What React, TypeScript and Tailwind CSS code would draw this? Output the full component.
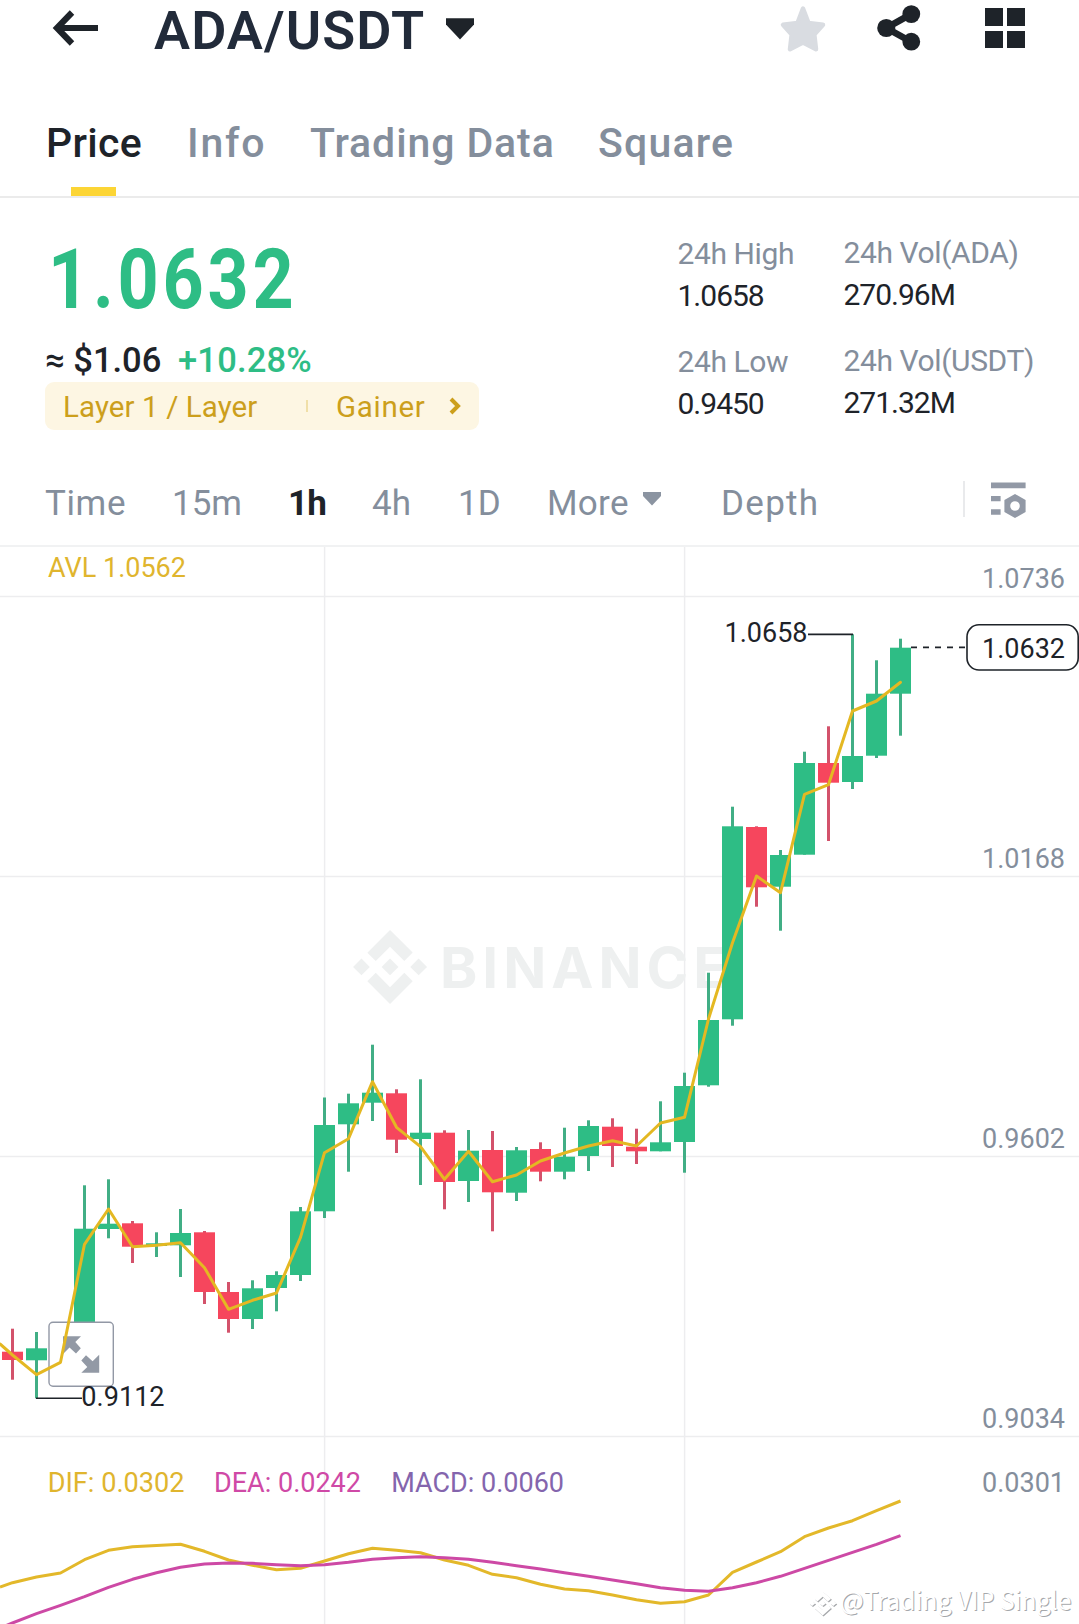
import React from "react";

const UP = "#2ebd85";
const DOWN = "#f6465d";
const STEP = 24;
const X0 = 12.5;

const BINANCE =
  "M16.624 13.9202l2.7175 2.7154-7.353 7.353-7.353-7.352 2.7175-2.7164 4.6355 4.6595 4.6356-4.6595zm4.6366-4.6366L24 12l-2.7154 2.7164L18.5682 12l2.6924-2.7164zm-9.272.001l2.7163 2.6914-2.7164 2.7174v-.001L9.2721 12l2.7164-2.7154zm-9.2722-.001L5.4088 12l-2.6914 2.6924L0 12l2.7164-2.7164zM11.9885.0115l7.353 7.329-2.7174 2.7154-4.6356-4.6356-4.6355 4.6595-2.7174-2.7154 7.353-7.353z";

// index, direction, body top, body bottom, wick top, wick bottom
type Candle = [number, "u" | "d", number, number, number, number];
const candles: Candle[] = [
  [0, "d", 1351.7, 1360, 1328.7, 1379.7],
  [1, "u", 1348.3, 1360.3, 1332, 1398.3],
  [3, "u", 1228.7, 1340, 1185.3, 1340],
  [4, "u", 1223.7, 1229, 1179.3, 1238.3],
  [5, "d", 1223.3, 1246.7, 1221, 1263],
  [6, "u", 1243.3, 1246, 1232.3, 1257],
  [7, "u", 1233, 1245.3, 1209, 1277],
  [8, "d", 1232.3, 1292, 1231, 1304],
  [9, "d", 1292, 1319, 1282, 1332.7],
  [10, "u", 1288.3, 1319, 1280.3, 1329],
  [11, "u", 1275, 1288, 1271.3, 1311.3],
  [12, "u", 1211.3, 1275, 1207, 1281],
  [13, "u", 1125, 1211.3, 1097.5, 1218],
  [14, "u", 1103.3, 1124.3, 1093.7, 1171.7],
  [15, "u", 1092.7, 1102.7, 1044.7, 1121],
  [16, "d", 1093.3, 1139.7, 1089.3, 1153],
  [17, "u", 1132.7, 1139, 1079.3, 1185],
  [18, "d", 1132.7, 1182, 1130.3, 1209.3],
  [19, "u", 1150.7, 1181, 1130, 1202],
  [20, "d", 1150, 1192.3, 1131, 1231.3],
  [21, "u", 1150.3, 1192.7, 1147, 1201],
  [22, "d", 1149, 1171.7, 1142.3, 1181.3],
  [23, "u", 1156.7, 1171.7, 1127.7, 1179.3],
  [24, "u", 1126, 1156, 1120.3, 1171],
  [25, "d", 1126.7, 1146, 1118.3, 1167],
  [26, "d", 1146.7, 1151.3, 1128.7, 1164],
  [27, "u", 1142.3, 1151.3, 1101.3, 1151.3],
  [28, "u", 1086, 1142, 1072.7, 1172.7],
  [29, "u", 1020, 1085.3, 972.7, 1086.7],
  [30, "u", 826.3, 1019.3, 806.7, 1025.7],
  [31, "d", 827, 887.3, 826.3, 906.7],
  [32, "u", 855, 886.7, 850, 930.7],
  [33, "u", 763, 854.7, 751.7, 854.7],
  [34, "d", 763, 782.7, 726.3, 841],
  [35, "u", 756, 782, 634.3, 789],
  [36, "u", 693.7, 755.7, 660.3, 758],
  [37, "u", 647.7, 693.7, 638.7, 735.7],
];

const avl = [
  1355, 1374.7, 1362.3, 1244.3, 1209, 1246.7, 1245.3, 1242.7, 1267.7, 1309.3, 1300.3, 1293, 1237.3,
  1152.7, 1138.7, 1081.7, 1127.3, 1146.7, 1179.3, 1151.3, 1181.7, 1175, 1161, 1153, 1146, 1140.7,
  1146, 1123, 1117.3, 1019, 942.7, 876, 892.7, 794.3, 784.7, 711, 701, 682.3,
];
const dif = [
  1582.7, 1577, 1573, 1559.7, 1550.3, 1546.7, 1545.4, 1544.3, 1551.3, 1560, 1565.3, 1569.7, 1568.3,
  1561, 1553.7, 1548.3, 1550.3, 1552.7, 1560, 1565.3, 1574.3, 1577.7, 1584.3, 1589, 1590.7, 1595,
  1599.7, 1603.3, 1601.7, 1595, 1572.3, 1562, 1551.7, 1536.7, 1528, 1520.7, 1510.7, 1501,
];
const dea = [
  1623, 1613.7, 1605.3, 1596.7, 1587.3, 1579.3, 1572.7, 1567.3, 1564, 1563, 1563.3, 1564.7, 1565.7,
  1564.7, 1562.3, 1559.3, 1557.7, 1556.7, 1557.7, 1559.3, 1562.3, 1565.7, 1569, 1572.7, 1576.3,
  1580, 1583.7, 1587.7, 1590.3, 1591.3, 1587.7, 1582.7, 1576.3, 1568.3, 1560.3, 1552.3, 1544.3,
  1535.7,
];

const line = (first: number, ys: number[]) =>
  [`0,${first}`, ...ys.map((y, i) => `${X0 + i * STEP},${y}`)].join(" ");

function Label({
  x,
  y,
  w,
  fill,
  children,
}: {
  x: number;
  y: number;
  w: number;
  fill: string;
  children: string;
}) {
  return (
    <text x={x} y={y} textLength={w} lengthAdjust="spacingAndGlyphs" fontSize="28" fill={fill}>
      {children}
    </text>
  );
}

function Chart() {
  return (
    <svg
      className="block h-[1077px] w-[1079px] font-['Roboto',sans-serif]"
      viewBox="0 547 1079 1077"
    >
      <g stroke="#ededef" strokeWidth="1.5">
        {[596.5, 876.5, 1156.5, 1436.5].map((y) => (
          <line key={y} x1="0" x2="1079" y1={y} y2={y} />
        ))}
        {[324.6, 684.6].map((x) => (
          <line key={x} x1={x} x2={x} y1="547" y2="1624" />
        ))}
      </g>

      <g fill="#eef0f0">
        <path d={BINANCE} transform="translate(353.1 930) scale(3.08)" />
        <text
          x="440"
          y="987.7"
          fontSize="56.5"
          fontWeight="700"
          textLength="287.5"
          lengthAdjust="spacing"
          className="font-['Inter',sans-serif]"
        >
          BINANCE
        </text>
      </g>

      {candles.map(([i, dir, top, bottom, high, low]) => {
        const x = X0 + i * STEP;
        return (
          <g key={i}>
            <rect
              x={x - 1.5}
              y={high}
              width="3"
              height={low - high}
              fill={dir === "u" ? "#41ae85" : "#d3526b"}
            />
            <rect
              x={x - 10.5}
              y={top}
              width="21"
              height={bottom - top}
              fill={dir === "u" ? UP : DOWN}
            />
          </g>
        );
      })}

      <rect x="49" y="1322.3" width="64.3" height="64" rx="4" fill="#fff" stroke="#9298a5" strokeWidth="1.4" />
      <g fill="#9299a5">
        <path d="M63 1336.3H81L75.3 1342L80.8 1348.2L76 1353.6L69.5 1347.6L63 1354Z" />
        <path d="M99.2 1372.8H81.3L87.3 1367L81.3 1360.6L86 1355.2L92.6 1361.2L99.2 1354.7Z" />
      </g>

      <g fill="none" strokeWidth="3" strokeLinejoin="round">
        <polyline points={line(1344, avl)} stroke="#e4b822" strokeLinecap="round" />
        <polyline points={line(1587, dif)} stroke="#e3b82a" />
        <polyline points={line(1628, dea)} stroke="#cd49a5" />
      </g>

      <g stroke="#1e2329" strokeWidth="1.6" fill="none">
        <path d="M808 634.4H853M36 1398.3H82" />
        <path d="M911 647.4H967" strokeDasharray="6 6" />
        <rect x="967" y="624.8" width="111.2" height="45.2" rx="12" fill="#fff" />
      </g>

      <Label x={48} y={577} w={138} fill="#e0b52e">AVL 1.0562</Label>
      <Label x={724.5} y={642} w={83} fill="#1e2329">1.0658</Label>
      <Label x={982} y={658} w={83} fill="#1e2329">1.0632</Label>
      <Label x={81.3} y={1406} w={83.3} fill="#1e2329">0.9112</Label>
      <Label x={982} y={587.7} w={83} fill="#848e9c">1.0736</Label>
      <Label x={982} y={867.5} w={83} fill="#848e9c">1.0168</Label>
      <Label x={982} y={1147.5} w={83} fill="#848e9c">0.9602</Label>
      <Label x={982} y={1427.5} w={83} fill="#848e9c">0.9034</Label>
      <Label x={982} y={1491.7} w={83} fill="#848e9c">0.0301</Label>
      <Label x={47.7} y={1491.7} w={136.8} fill="#e0b52e">DIF: 0.0302</Label>
      <Label x={214} y={1491.7} w={147} fill="#cf49a6">DEA: 0.0242</Label>
      <Label x={391.2} y={1491.7} w={172.8} fill="#8465ad">MACD: 0.0060</Label>

      <g className="font-['Noto_Sans_CJK_SC',sans-serif]">
        <g fill="#a6a8ab">
          <path d={BINANCE} transform="translate(809.9 1592.4) scale(1.14 1)" />
          <text x="840.9" y="1610.9" fontSize="25" textLength="231.5">@Trading VIP Single</text>
        </g>
        <g fill="#fff">
          <path d={BINANCE} transform="translate(809 1591.4) scale(1.14 1)" />
          <text x="839.9" y="1609.9" fontSize="25" textLength="231.5">@Trading VIP Single</text>
        </g>
      </g>
    </svg>
  );
}

function Stat({ label, value }: { label: string; value: string }) {
  return (
    <div className="h-[108px] whitespace-nowrap text-[30px] leading-[30px]">
      <div className="tracking-[-.4px] text-[#848e9c]">{label}</div>
      <div className="mt-3 tracking-[-1px] text-[#1e2329]">{value}</div>
    </div>
  );
}

export default function App() {
  return (
    <div className="h-[1624px] w-[1079px] overflow-hidden bg-white font-['Roboto',sans-serif] text-[#1e2329]">
      <header className="flex h-[98px] items-start whitespace-nowrap">
        <svg className="ml-[50px] mt-[8px] h-10 w-[50px]" viewBox="0 0 50 40" fill="none" stroke="#1e2329" strokeWidth="6.2">
          <path d="M48 20H7M22 4.5L7 20L22 35.5" />
        </svg>
        <h1 className="ml-[54px] mt-[1px] w-[270px] text-[54px] font-semibold leading-[60px] tracking-[1.1px] text-[#222b3a]">ADA/USDT</h1>
        <svg className="ml-[22px] mt-[18px] h-[22px] w-[28px]" viewBox="0 0 28 22">
          <path d="M0 .3H28V6.5L14 21.5L0 6.5Z" fill="#1e2329" />
        </svg>
        <svg className="ml-[304px] mt-[4px] h-[50px] w-[50px]" viewBox="778 4 50 50">
          <path
            d="M803 8.5L808.5 23L823 24.8L814.3 34.5L816 49.2L803 42.6L790 49.2L791.7 34.5L783 24.8L797.5 23Z"
            fill="#d9dce1"
            stroke="#d9dce1"
            strokeWidth="4.5"
            strokeLinejoin="round"
          />
        </svg>
        <svg className="ml-[47px] mt-[4px] h-[50px] w-[50px]" viewBox="875 4 50 50">
          <path d="M911.3 14L886.2 28L911.3 41.8" fill="none" stroke="#1e2329" strokeWidth="6.6" />
          <g fill="#1e2329">
            <circle cx="911.3" cy="14.1" r="8.9" />
            <circle cx="886.3" cy="28" r="9.1" />
            <circle cx="911.3" cy="41.7" r="8.9" />
          </g>
        </svg>
        <div className="ml-[60px] mt-2 grid grid-cols-[18px_18px] gap-x-[4px] gap-y-[5px]">
          {[0, 1, 2, 3].map((i) => (
            <span key={i} className="h-[17.5px] bg-[#1e2329]" />
          ))}
        </div>
      </header>

      <nav className="flex h-[100px] whitespace-nowrap border-b-2 border-[#ebebeb] pt-[25px] text-[41px] font-medium leading-[40px] tracking-[.9px] text-[#848e9c]">
        <div className="ml-[46px] w-[95px] tracking-[.3px] text-[#1e2329]">
          Price
          <div className="ml-[25px] mt-[24px] h-[9px] w-[45px] bg-[#fcd535]" />
        </div>
        <div className="ml-[46px] w-[78px] tracking-[1.8px]">Info</div>
        <div className="ml-[45px] w-[243px]">Trading Data</div>
        <div className="ml-[45px] tracking-[1.2px]">Square</div>
      </nav>

      <section className="flex h-[252px] whitespace-nowrap">
        <div className="w-[677.5px] pl-[45px] pt-[40px]">
          <div className="text-[83.5px] font-bold leading-[84px] text-[#2ebd85]">
            <span className="ml-[3px] inline-block origin-left scale-x-[.86] tracking-[4.4px]">1.0632</span>
          </div>
          <div className="mt-[20px] flex text-[34.5px] font-medium leading-[36px]">
            <span className="w-[133px]">≈ $1.06</span>
            <span className="tracking-[.2px] text-[#2ebd85]">+10.28%</span>
          </div>
          <div className="mt-[4px] flex h-[48px] w-[434px] items-center rounded-[9px] bg-[#fdf6e3] pl-[18px] text-[29.5px] text-[#cc9f1c]">
            <span className="w-[243px] pt-[2px] tracking-[.1px]">Layer 1 / Layer</span>
            <span className="h-3 w-[2px] bg-[#f0dfa8]" />
            <span className="ml-[28px] w-[113px] pt-[2px] tracking-[.7px]">Gainer</span>
            <svg className="h-[18px] w-[12px]" viewBox="0 0 12 18" fill="none" stroke="#cc9f1c" strokeWidth="4">
              <path d="M2 2L9 9L2 16" />
            </svg>
          </div>
        </div>
        <div className="w-[166px] pt-[41px]">
          <Stat label="24h High" value="1.0658" />
          <Stat label="24h Low" value="0.9450" />
        </div>
        <div className="pt-[40px]">
          <Stat label="24h Vol(ADA)" value="270.96M" />
          <Stat label="24h Vol(USDT)" value="271.32M" />
        </div>
      </section>

      <div className="flex h-[97px] items-start whitespace-nowrap border-b-2 border-[#f1f2f3] pl-[45px] pt-[36px] text-[35px] leading-[35px] text-[#848e9c]">
        <span className="w-[127px] tracking-[.6px]">Time</span>
        <span className="w-[116px]">15m</span>
        <span className="w-[84px] font-bold tracking-[-.8px] text-[#1e2329]">1h</span>
        <span className="w-[86px]">4h</span>
        <span className="w-[89px]">1D</span>
        <span className="w-[96px] tracking-[.3px]">More</span>
        <svg className="mt-[6px] h-[14px] w-[18px]" viewBox="0 0 18 14">
          <path d="M0 0H18V4L9 13.5L0 4Z" fill="#8b94a1" />
        </svg>
        <span className="ml-[60px] w-[242px] tracking-[1.3px]">Depth</span>
        <span className="-mt-[5px] h-[36px] w-[2px] bg-[#e9eaec]" />
        <svg className="-mt-[4px] ml-[26px] h-[38px] w-[36px]" viewBox="991 482 36 38" fill="#9299a6">
          <path d="M991 482.5H1025.6V488.2H991ZM991 496H1000.6V501.3H991ZM991 509.3H1000.6V514.8H991Z" />
          <path
            fillRule="evenodd"
            d="M1015 494L1025.6 500V512L1015 518L1004.4 512V500ZM1015 501.2A4.8 4.8 0 1 0 1015 510.8A4.8 4.8 0 1 0 1015 501.2Z"
          />
        </svg>
      </div>

      <Chart />
    </div>
  );
}
